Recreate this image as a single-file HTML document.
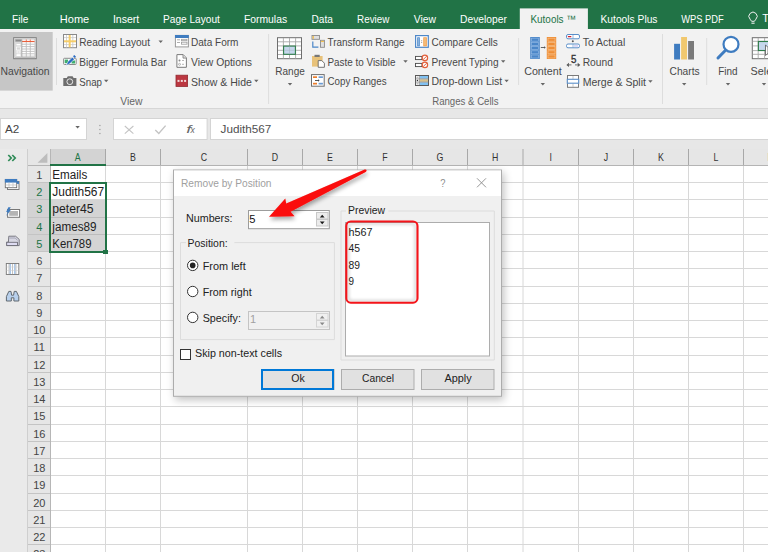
<!DOCTYPE html><html><head><meta charset="utf-8"><style>html,body{margin:0;padding:0;width:768px;height:552px;overflow:hidden;background:#fff}svg{display:block}text{font-family:"Liberation Sans",sans-serif;white-space:pre}</style></head><body>
<svg width="768" height="552" viewBox="0 0 768 552">
<rect x="0" y="0" width="768" height="29" fill="#217346" />
<text x="12.0" y="23" font-size="11" fill="#fff" textLength="16.3" lengthAdjust="spacingAndGlyphs" >File</text>
<text x="59.8" y="23" font-size="11" fill="#fff" textLength="29.4" lengthAdjust="spacingAndGlyphs" >Home</text>
<text x="112.9" y="23" font-size="11" fill="#fff" textLength="26.4" lengthAdjust="spacingAndGlyphs" >Insert</text>
<text x="163.0" y="23" font-size="11" fill="#fff" textLength="56.9" lengthAdjust="spacingAndGlyphs" >Page Layout</text>
<text x="243.9" y="23" font-size="11" fill="#fff" textLength="43.2" lengthAdjust="spacingAndGlyphs" >Formulas</text>
<text x="311.5" y="23" font-size="11" fill="#fff" textLength="21.3" lengthAdjust="spacingAndGlyphs" >Data</text>
<text x="357.1" y="23" font-size="11" fill="#fff" textLength="32.2" lengthAdjust="spacingAndGlyphs" >Review</text>
<text x="413.7" y="23" font-size="11" fill="#fff" textLength="22.3" lengthAdjust="spacingAndGlyphs" >View</text>
<text x="460.1" y="23" font-size="11" fill="#fff" textLength="46.7" lengthAdjust="spacingAndGlyphs" >Developer</text>
<text x="600.5" y="23" font-size="11" fill="#fff" textLength="57" lengthAdjust="spacingAndGlyphs" >Kutools Plus</text>
<text x="681.2" y="23" font-size="11" fill="#fff" textLength="42.6" lengthAdjust="spacingAndGlyphs" >WPS PDF</text>
<rect x="519.8" y="8.4" width="68.1" height="22" fill="#f2f2f2" />
<text x="530.5" y="23" font-size="11" fill="#217346" textLength="45.7" lengthAdjust="spacingAndGlyphs" >Kutools ™</text>
<g fill="none" stroke="#f0f0f0" stroke-width="1"><path d="M751.6 21.3 L750.1 19.2 A4.1 4.1 0 1 1 755.9 19.2 L754.4 21.3 Z"/><path d="M751.4 23.2 h3.2" stroke-width="1.1"/></g>
<text x="762.2" y="22.4" font-size="11" fill="#fff" >T</text>
<rect x="0" y="29" width="768" height="79" fill="#f2f2f2" />
<rect x="0" y="32" width="52.7" height="58.6" fill="#c6c6c6" />
<text x="0.5" y="75" font-size="11" fill="#484848" textLength="49" lengthAdjust="spacingAndGlyphs" >Navigation</text>
<line x1="56.5" y1="38" x2="56.5" y2="85" stroke="#dddddd" stroke-width="1" />
<line x1="268.6" y1="34" x2="268.6" y2="104" stroke="#dddddd" stroke-width="1" />
<line x1="518.6" y1="38" x2="518.6" y2="85" stroke="#dddddd" stroke-width="1" />
<line x1="662.5" y1="34" x2="662.5" y2="104" stroke="#dddddd" stroke-width="1" />
<line x1="706.7" y1="38" x2="706.7" y2="85" stroke="#dddddd" stroke-width="1" />
<text x="79.3" y="45.6" font-size="10.5" fill="#484848" textLength="70.7" lengthAdjust="spacingAndGlyphs" >Reading Layout</text>
<text x="79.3" y="65.69999999999999" font-size="10.5" fill="#484848" textLength="87.2" lengthAdjust="spacingAndGlyphs" >Bigger Formula Bar</text>
<text x="79.3" y="85.8" font-size="10.5" fill="#484848" textLength="22.7" lengthAdjust="spacingAndGlyphs" >Snap</text>
<text x="191.0" y="45.6" font-size="10.5" fill="#484848" textLength="47.5" lengthAdjust="spacingAndGlyphs" >Data Form</text>
<text x="191.0" y="65.69999999999999" font-size="10.5" fill="#484848" textLength="60.9" lengthAdjust="spacingAndGlyphs" >View Options</text>
<text x="191.0" y="85.8" font-size="10.5" fill="#484848" textLength="60.9" lengthAdjust="spacingAndGlyphs" >Show &amp; Hide</text>
<text x="327.5" y="46.1" font-size="10.5" fill="#484848" textLength="77" lengthAdjust="spacingAndGlyphs" >Transform Range</text>
<text x="327.5" y="65.6" font-size="10.5" fill="#484848" textLength="67.9" lengthAdjust="spacingAndGlyphs" >Paste to Visible</text>
<text x="327.5" y="85.3" font-size="10.5" fill="#484848" textLength="59.1" lengthAdjust="spacingAndGlyphs" >Copy Ranges</text>
<text x="431.4" y="45.9" font-size="10.5" fill="#484848" textLength="66.5" lengthAdjust="spacingAndGlyphs" >Compare Cells</text>
<text x="431.4" y="65.6" font-size="10.5" fill="#484848" textLength="67.2" lengthAdjust="spacingAndGlyphs" >Prevent Typing</text>
<text x="431.4" y="85.1" font-size="10.5" fill="#484848" textLength="70.9" lengthAdjust="spacingAndGlyphs" >Drop-down List</text>
<text x="582.7" y="45.6" font-size="10.5" fill="#484848" textLength="42.6" lengthAdjust="spacingAndGlyphs" >To Actual</text>
<text x="582.7" y="66.1" font-size="10.5" fill="#484848" textLength="30.3" lengthAdjust="spacingAndGlyphs" >Round</text>
<text x="582.7" y="85.69999999999999" font-size="10.5" fill="#484848" textLength="63.3" lengthAdjust="spacingAndGlyphs" >Merge &amp; Split</text>
<text x="275.3" y="75" font-size="11" fill="#484848" textLength="29.5" lengthAdjust="spacingAndGlyphs" >Range</text>
<text x="524.2" y="75" font-size="11" fill="#484848" textLength="37.5" lengthAdjust="spacingAndGlyphs" >Content</text>
<text x="669.6" y="75" font-size="11" fill="#484848" textLength="30" lengthAdjust="spacingAndGlyphs" >Charts</text>
<text x="718.3" y="75" font-size="11" fill="#484848" textLength="19.3" lengthAdjust="spacingAndGlyphs" >Find</text>
<text x="750.6" y="75" font-size="11" fill="#484848" textLength="30" lengthAdjust="spacingAndGlyphs" >Select</text>
<text x="120.25" y="105.2" font-size="11" fill="#666" textLength="22.25" lengthAdjust="spacingAndGlyphs" >View</text>
<text x="432.2" y="105.2" font-size="11" fill="#666" textLength="66.4" lengthAdjust="spacingAndGlyphs" >Ranges &amp; Cells</text>
<path d="M158.5 40.599999999999994 h4.4 l-2.2 2.4 z" fill="#666"/>
<path d="M104.0 79.8 h4.4 l-2.2 2.4 z" fill="#666"/>
<path d="M254.10000000000002 79.8 h4.4 l-2.2 2.4 z" fill="#666"/>
<path d="M403.3 60.3 h4.4 l-2.2 2.4 z" fill="#666"/>
<path d="M501.0 60.3 h4.4 l-2.2 2.4 z" fill="#666"/>
<path d="M504.40000000000003 79.8 h4.4 l-2.2 2.4 z" fill="#666"/>
<path d="M648.1999999999999 80.3 h4.4 l-2.2 2.4 z" fill="#666"/>
<path d="M287.8 83.1 h4.4 l-2.2 2.4 z" fill="#666"/>
<path d="M540.5999999999999 83.1 h4.4 l-2.2 2.4 z" fill="#666"/>
<path d="M682.0 83.1 h4.4 l-2.2 2.4 z" fill="#666"/>
<path d="M725.8 83.1 h4.4 l-2.2 2.4 z" fill="#666"/>
<path d="M761.8 83.1 h4.4 l-2.2 2.4 z" fill="#666"/>
<rect x="0" y="108" width="768" height="41.5" fill="#e7e7e7" />
<line x1="0" y1="108.5" x2="768" y2="108.5" stroke="#d6d6d6" stroke-width="1" />
<rect x="0.5" y="118.5" width="86" height="21" fill="#fff" stroke="#d4d4d4" stroke-width="1" />
<text x="5" y="133.3" font-size="11" fill="#444" textLength="14.3" lengthAdjust="spacingAndGlyphs" >A2</text>
<path d="M75.39999999999999 126.1 h4.4 l-2.2 2.4 z" fill="#666"/>
<rect x="99.3" y="124.9" width="1.2" height="1.2" fill="#9a9a9a" />
<rect x="99.3" y="128.9" width="1.2" height="1.2" fill="#9a9a9a" />
<rect x="99.3" y="132.9" width="1.2" height="1.2" fill="#9a9a9a" />
<rect x="113.5" y="118.5" width="93.6" height="21" fill="#fff" stroke="#d4d4d4" stroke-width="1" />
<rect x="210.5" y="118.5" width="560" height="21" fill="#fff" stroke="#d4d4d4" stroke-width="1" />
<text x="220.6" y="133.3" font-size="11.2" fill="#505050" textLength="50.8" lengthAdjust="spacingAndGlyphs" >Judith567</text>
<rect x="0" y="149" width="28" height="403" fill="#eaeaea" />
<line x1="27.5" y1="149" x2="27.5" y2="552" stroke="#cfcfcf" stroke-width="1" />
<rect x="28" y="149" width="740" height="16" fill="#e6e6e6" />
<rect x="28" y="165" width="22" height="390" fill="#e6e6e6" />
<rect x="50" y="149" width="55.5" height="16" fill="#d3d3d3" />
<rect x="28" y="182.5" width="22" height="69.0" fill="#d3d3d3" />
<line x1="50.5" y1="182.5" x2="768" y2="182.5" stroke="#d8d8d8" stroke-width="1" />
<line x1="28" y1="182.5" x2="50" y2="182.5" stroke="#c4c4c4" stroke-width="1" />
<line x1="50.5" y1="199.5" x2="768" y2="199.5" stroke="#d8d8d8" stroke-width="1" />
<line x1="28" y1="199.5" x2="50" y2="199.5" stroke="#c4c4c4" stroke-width="1" />
<line x1="50.5" y1="217.5" x2="768" y2="217.5" stroke="#d8d8d8" stroke-width="1" />
<line x1="28" y1="217.5" x2="50" y2="217.5" stroke="#c4c4c4" stroke-width="1" />
<line x1="50.5" y1="234.5" x2="768" y2="234.5" stroke="#d8d8d8" stroke-width="1" />
<line x1="28" y1="234.5" x2="50" y2="234.5" stroke="#c4c4c4" stroke-width="1" />
<line x1="50.5" y1="251.5" x2="768" y2="251.5" stroke="#d8d8d8" stroke-width="1" />
<line x1="28" y1="251.5" x2="50" y2="251.5" stroke="#c4c4c4" stroke-width="1" />
<line x1="50.5" y1="268.5" x2="768" y2="268.5" stroke="#d8d8d8" stroke-width="1" />
<line x1="28" y1="268.5" x2="50" y2="268.5" stroke="#c4c4c4" stroke-width="1" />
<line x1="50.5" y1="286.5" x2="768" y2="286.5" stroke="#d8d8d8" stroke-width="1" />
<line x1="28" y1="286.5" x2="50" y2="286.5" stroke="#c4c4c4" stroke-width="1" />
<line x1="50.5" y1="303.5" x2="768" y2="303.5" stroke="#d8d8d8" stroke-width="1" />
<line x1="28" y1="303.5" x2="50" y2="303.5" stroke="#c4c4c4" stroke-width="1" />
<line x1="50.5" y1="320.5" x2="768" y2="320.5" stroke="#d8d8d8" stroke-width="1" />
<line x1="28" y1="320.5" x2="50" y2="320.5" stroke="#c4c4c4" stroke-width="1" />
<line x1="50.5" y1="337.5" x2="768" y2="337.5" stroke="#d8d8d8" stroke-width="1" />
<line x1="28" y1="337.5" x2="50" y2="337.5" stroke="#c4c4c4" stroke-width="1" />
<line x1="50.5" y1="355.5" x2="768" y2="355.5" stroke="#d8d8d8" stroke-width="1" />
<line x1="28" y1="355.5" x2="50" y2="355.5" stroke="#c4c4c4" stroke-width="1" />
<line x1="50.5" y1="372.5" x2="768" y2="372.5" stroke="#d8d8d8" stroke-width="1" />
<line x1="28" y1="372.5" x2="50" y2="372.5" stroke="#c4c4c4" stroke-width="1" />
<line x1="50.5" y1="389.5" x2="768" y2="389.5" stroke="#d8d8d8" stroke-width="1" />
<line x1="28" y1="389.5" x2="50" y2="389.5" stroke="#c4c4c4" stroke-width="1" />
<line x1="50.5" y1="406.5" x2="768" y2="406.5" stroke="#d8d8d8" stroke-width="1" />
<line x1="28" y1="406.5" x2="50" y2="406.5" stroke="#c4c4c4" stroke-width="1" />
<line x1="50.5" y1="424.5" x2="768" y2="424.5" stroke="#d8d8d8" stroke-width="1" />
<line x1="28" y1="424.5" x2="50" y2="424.5" stroke="#c4c4c4" stroke-width="1" />
<line x1="50.5" y1="441.5" x2="768" y2="441.5" stroke="#d8d8d8" stroke-width="1" />
<line x1="28" y1="441.5" x2="50" y2="441.5" stroke="#c4c4c4" stroke-width="1" />
<line x1="50.5" y1="458.5" x2="768" y2="458.5" stroke="#d8d8d8" stroke-width="1" />
<line x1="28" y1="458.5" x2="50" y2="458.5" stroke="#c4c4c4" stroke-width="1" />
<line x1="50.5" y1="475.5" x2="768" y2="475.5" stroke="#d8d8d8" stroke-width="1" />
<line x1="28" y1="475.5" x2="50" y2="475.5" stroke="#c4c4c4" stroke-width="1" />
<line x1="50.5" y1="493.5" x2="768" y2="493.5" stroke="#d8d8d8" stroke-width="1" />
<line x1="28" y1="493.5" x2="50" y2="493.5" stroke="#c4c4c4" stroke-width="1" />
<line x1="50.5" y1="510.5" x2="768" y2="510.5" stroke="#d8d8d8" stroke-width="1" />
<line x1="28" y1="510.5" x2="50" y2="510.5" stroke="#c4c4c4" stroke-width="1" />
<line x1="50.5" y1="527.5" x2="768" y2="527.5" stroke="#d8d8d8" stroke-width="1" />
<line x1="28" y1="527.5" x2="50" y2="527.5" stroke="#c4c4c4" stroke-width="1" />
<line x1="50.5" y1="544.5" x2="768" y2="544.5" stroke="#d8d8d8" stroke-width="1" />
<line x1="28" y1="544.5" x2="50" y2="544.5" stroke="#c4c4c4" stroke-width="1" />
<line x1="50.5" y1="562.5" x2="768" y2="562.5" stroke="#d8d8d8" stroke-width="1" />
<line x1="28" y1="562.5" x2="50" y2="562.5" stroke="#c4c4c4" stroke-width="1" />
<line x1="105.5" y1="166" x2="105.5" y2="552" stroke="#d8d8d8" stroke-width="1" />
<line x1="105.5" y1="149" x2="105.5" y2="165" stroke="#a8a8a8" stroke-width="1" />
<line x1="160.5" y1="166" x2="160.5" y2="552" stroke="#d8d8d8" stroke-width="1" />
<line x1="160.5" y1="149" x2="160.5" y2="165" stroke="#a8a8a8" stroke-width="1" />
<line x1="247.5" y1="166" x2="247.5" y2="552" stroke="#d8d8d8" stroke-width="1" />
<line x1="247.5" y1="149" x2="247.5" y2="165" stroke="#a8a8a8" stroke-width="1" />
<line x1="302.5" y1="166" x2="302.5" y2="552" stroke="#d8d8d8" stroke-width="1" />
<line x1="302.5" y1="149" x2="302.5" y2="165" stroke="#a8a8a8" stroke-width="1" />
<line x1="357.5" y1="166" x2="357.5" y2="552" stroke="#d8d8d8" stroke-width="1" />
<line x1="357.5" y1="149" x2="357.5" y2="165" stroke="#a8a8a8" stroke-width="1" />
<line x1="412.5" y1="166" x2="412.5" y2="552" stroke="#d8d8d8" stroke-width="1" />
<line x1="412.5" y1="149" x2="412.5" y2="165" stroke="#a8a8a8" stroke-width="1" />
<line x1="467.5" y1="166" x2="467.5" y2="552" stroke="#d8d8d8" stroke-width="1" />
<line x1="467.5" y1="149" x2="467.5" y2="165" stroke="#a8a8a8" stroke-width="1" />
<line x1="523.0" y1="166" x2="523.0" y2="552" stroke="#d8d8d8" stroke-width="1" />
<line x1="523.0" y1="149" x2="523.0" y2="165" stroke="#a8a8a8" stroke-width="1" />
<line x1="578.5" y1="166" x2="578.5" y2="552" stroke="#d8d8d8" stroke-width="1" />
<line x1="578.5" y1="149" x2="578.5" y2="165" stroke="#a8a8a8" stroke-width="1" />
<line x1="633.5" y1="166" x2="633.5" y2="552" stroke="#d8d8d8" stroke-width="1" />
<line x1="633.5" y1="149" x2="633.5" y2="165" stroke="#a8a8a8" stroke-width="1" />
<line x1="688.5" y1="166" x2="688.5" y2="552" stroke="#d8d8d8" stroke-width="1" />
<line x1="688.5" y1="149" x2="688.5" y2="165" stroke="#a8a8a8" stroke-width="1" />
<line x1="743.5" y1="166" x2="743.5" y2="552" stroke="#d8d8d8" stroke-width="1" />
<line x1="743.5" y1="149" x2="743.5" y2="165" stroke="#a8a8a8" stroke-width="1" />
<line x1="28" y1="165.5" x2="768" y2="165.5" stroke="#b4b4b4" stroke-width="1" />
<line x1="50.5" y1="149" x2="50.5" y2="552" stroke="#b6b6b6" stroke-width="1" />
<line x1="50" y1="165" x2="106" y2="165" stroke="#217346" stroke-width="2" />
<path d="M47.4 153 L47.4 162.8 L37.6 162.8 Z" fill="#bdbdbd"/>
<text x="74.81" y="161" font-size="11" fill="#217346" textLength="5.87" lengthAdjust="spacingAndGlyphs" >A</text>
<text x="130.06" y="161" font-size="11" fill="#333" textLength="5.87" lengthAdjust="spacingAndGlyphs" >B</text>
<text x="200.82" y="161" font-size="11" fill="#333" textLength="6.35" lengthAdjust="spacingAndGlyphs" >C</text>
<text x="271.82" y="161" font-size="11" fill="#333" textLength="6.35" lengthAdjust="spacingAndGlyphs" >D</text>
<text x="327.06" y="161" font-size="11" fill="#333" textLength="5.87" lengthAdjust="spacingAndGlyphs" >E</text>
<text x="382.31" y="161" font-size="11" fill="#333" textLength="5.38" lengthAdjust="spacingAndGlyphs" >F</text>
<text x="436.58" y="161" font-size="11" fill="#333" textLength="6.85" lengthAdjust="spacingAndGlyphs" >G</text>
<text x="492.07" y="161" font-size="11" fill="#333" textLength="6.35" lengthAdjust="spacingAndGlyphs" >H</text>
<text x="549.53" y="161" font-size="11" fill="#333" textLength="2.45" lengthAdjust="spacingAndGlyphs" >I</text>
<text x="603.8" y="161" font-size="11" fill="#333" textLength="4.4" lengthAdjust="spacingAndGlyphs" >J</text>
<text x="658.06" y="161" font-size="11" fill="#333" textLength="5.87" lengthAdjust="spacingAndGlyphs" >K</text>
<text x="713.55" y="161" font-size="11" fill="#333" textLength="4.9" lengthAdjust="spacingAndGlyphs" >L</text>
<text x="767.59" y="161" font-size="11" fill="#333" textLength="7.33" lengthAdjust="spacingAndGlyphs" >M</text>
<text x="39.25" y="178.95000000000002" font-size="11" fill="#444" text-anchor="middle" >1</text>
<text x="39.25" y="196.20000000000002" font-size="11" fill="#217346" text-anchor="middle" >2</text>
<text x="39.25" y="213.45000000000002" font-size="11" fill="#217346" text-anchor="middle" >3</text>
<text x="39.25" y="230.70000000000002" font-size="11" fill="#217346" text-anchor="middle" >4</text>
<text x="39.25" y="247.95000000000002" font-size="11" fill="#217346" text-anchor="middle" >5</text>
<text x="39.25" y="265.2" font-size="11" fill="#444" text-anchor="middle" >6</text>
<text x="39.25" y="282.45" font-size="11" fill="#444" text-anchor="middle" >7</text>
<text x="39.25" y="299.7" font-size="11" fill="#444" text-anchor="middle" >8</text>
<text x="39.25" y="316.95" font-size="11" fill="#444" text-anchor="middle" >9</text>
<text x="39.25" y="334.2" font-size="11" fill="#444" text-anchor="middle" >10</text>
<text x="39.25" y="351.45" font-size="11" fill="#444" text-anchor="middle" >11</text>
<text x="39.25" y="368.7" font-size="11" fill="#444" text-anchor="middle" >12</text>
<text x="39.25" y="385.95" font-size="11" fill="#444" text-anchor="middle" >13</text>
<text x="39.25" y="403.2" font-size="11" fill="#444" text-anchor="middle" >14</text>
<text x="39.25" y="420.45" font-size="11" fill="#444" text-anchor="middle" >15</text>
<text x="39.25" y="437.7" font-size="11" fill="#444" text-anchor="middle" >16</text>
<text x="39.25" y="454.95" font-size="11" fill="#444" text-anchor="middle" >17</text>
<text x="39.25" y="472.2" font-size="11" fill="#444" text-anchor="middle" >18</text>
<text x="39.25" y="489.45" font-size="11" fill="#444" text-anchor="middle" >19</text>
<text x="39.25" y="506.7" font-size="11" fill="#444" text-anchor="middle" >20</text>
<text x="39.25" y="523.9499999999999" font-size="11" fill="#444" text-anchor="middle" >21</text>
<text x="39.25" y="541.1999999999999" font-size="11" fill="#444" text-anchor="middle" >22</text>
<text x="39.25" y="558.4499999999999" font-size="11" fill="#444" text-anchor="middle" >23</text>
<rect x="51" y="200.0" width="54" height="51.5" fill="#d4d4d4" />
<line x1="51" y1="217.5" x2="105" y2="217.5" stroke="#bcbcbc" stroke-width="1" />
<line x1="51" y1="234.5" x2="105" y2="234.5" stroke="#bcbcbc" stroke-width="1" />
<rect x="50" y="183" width="56" height="69" fill="none" stroke="#217346" stroke-width="2" />
<rect x="103" y="250" width="5" height="4" fill="#217346" />
<text x="52.3" y="178.75" font-size="12" fill="#222" textLength="35" lengthAdjust="spacingAndGlyphs" >Emails</text>
<text x="52.3" y="196.0" font-size="12" fill="#222" textLength="51.8" lengthAdjust="spacingAndGlyphs" >Judith567</text>
<text x="52.3" y="213.25" font-size="12" fill="#222" textLength="41.3" lengthAdjust="spacingAndGlyphs" >peter45</text>
<text x="52.3" y="230.5" font-size="12" fill="#222" textLength="44.2" lengthAdjust="spacingAndGlyphs" >james89</text>
<text x="52.3" y="247.75" font-size="12" fill="#222" textLength="39.2" lengthAdjust="spacingAndGlyphs" >Ken789</text>
<defs><filter id="sh" x="-10%" y="-10%" width="130%" height="130%"><feGaussianBlur in="SourceAlpha" stdDeviation="4"/><feOffset dx="2" dy="3"/><feComponentTransfer><feFuncA type="linear" slope="0.25"/></feComponentTransfer><feMerge><feMergeNode/><feMergeNode in="SourceGraphic"/></feMerge></filter><filter id="ash" x="-20%" y="-40%" width="150%" height="200%"><feGaussianBlur in="SourceAlpha" stdDeviation="2"/><feOffset dx="1" dy="3"/><feComponentTransfer><feFuncA type="linear" slope="0.35"/></feComponentTransfer><feMerge><feMergeNode/><feMergeNode in="SourceGraphic"/></feMerge></filter></defs>
<rect x="173.5" y="170" width="328" height="226.3" fill="#f0f0f0" stroke="#acacac" stroke-width="1" filter="url(#sh)"/>
<rect x="174" y="170.5" width="327" height="25.5" fill="#fff" />
<text x="181" y="187.3" font-size="10.5" fill="#a0a0a0" textLength="90.5" lengthAdjust="spacingAndGlyphs" >Remove by Position</text>
<text x="440.2" y="186.7" font-size="11.5" fill="#8c8c8c" textLength="5.2" lengthAdjust="spacingAndGlyphs" >?</text>
<path d="M477 178.3 L486 187.3 M486 178.3 L477 187.3" stroke="#8a8a8a" stroke-width="0.9"/>
<text x="186" y="222.1" font-size="11.5" fill="#222" textLength="46.5" lengthAdjust="spacingAndGlyphs" >Numbers:</text>
<rect x="248.5" y="210.5" width="80.8" height="18.2" fill="#fff" stroke="#9c9c9c" stroke-width="1" />
<text x="249.2" y="222.6" font-size="11" fill="#111" textLength="6.2" lengthAdjust="spacingAndGlyphs" >5</text>
<rect x="316.5" y="212.5" width="11.5" height="6.5" fill="#ececec" stroke="#c8c8c8" stroke-width="1" />
<rect x="316.5" y="219.5" width="11.5" height="6.5" fill="#ececec" stroke="#c8c8c8" stroke-width="1" />
<path d="M319.8 217.6 h4.8 l-2.4 -2.8 z M319.8 221.4 h4.8 l-2.4 2.8 z" fill="#1a1a1a"/>
<path d="M186 242.6 h-5.5 v97 h153.9 v-97 h-100" fill="none" stroke="#dcdcdc"/>
<text x="187.6" y="246.6" font-size="11.5" fill="#222" textLength="40" lengthAdjust="spacingAndGlyphs" >Position:</text>
<circle cx="192.7" cy="265.4" r="5.2" fill="#fff" stroke="#333" stroke-width="1"/>
<text x="202.7" y="269.79999999999995" font-size="11.5" fill="#222" textLength="43" lengthAdjust="spacingAndGlyphs" >From left</text>
<circle cx="192.7" cy="291.5" r="5.2" fill="#fff" stroke="#333" stroke-width="1"/>
<text x="202.7" y="295.9" font-size="11.5" fill="#222" textLength="49" lengthAdjust="spacingAndGlyphs" >From right</text>
<circle cx="192.7" cy="317.4" r="5.2" fill="#fff" stroke="#333" stroke-width="1"/>
<text x="202.7" y="321.79999999999995" font-size="11.5" fill="#222" textLength="38.2" lengthAdjust="spacingAndGlyphs" >Specify:</text>
<circle cx="192.7" cy="265.4" r="2.8" fill="#222"/>
<rect x="248.5" y="311.5" width="81" height="18" fill="#f0f0f0" stroke="#c4c4c4" stroke-width="1" />
<text x="250" y="322.8" font-size="11" fill="#a0a0a0" >1</text>
<rect x="316.5" y="313.5" width="11.5" height="6.5" fill="#f0f0f0" stroke="#d4d4d4" stroke-width="1" />
<rect x="316.5" y="320.5" width="11.5" height="6.5" fill="#f0f0f0" stroke="#d4d4d4" stroke-width="1" />
<path d="M319.8 318.6 h4.8 l-2.4 -2.8 z M319.8 322.4 h4.8 l-2.4 2.8 z" fill="#8a8a8a"/>
<rect x="180.5" y="349.5" width="10" height="10" fill="#fff" stroke="#333" stroke-width="1" />
<text x="195" y="357.4" font-size="11" fill="#222" textLength="87" lengthAdjust="spacingAndGlyphs" >Skip non-text cells</text>
<path d="M346 211 h-5 v149 h153.3 v-149 h-106" fill="none" stroke="#dcdcdc"/>
<text x="348" y="214.3" font-size="10.2" fill="#222" textLength="37" lengthAdjust="spacingAndGlyphs" >Preview</text>
<rect x="345.5" y="222.5" width="144" height="133.5" fill="#fff" stroke="#adadad" stroke-width="1" />
<text x="348.5" y="236.0" font-size="11" fill="#222" textLength="24" lengthAdjust="spacingAndGlyphs" >h567</text>
<text x="348.5" y="252.29999999999998" font-size="11" fill="#222" textLength="11.5" lengthAdjust="spacingAndGlyphs" >45</text>
<text x="348.5" y="268.8" font-size="11" fill="#222" textLength="11.5" lengthAdjust="spacingAndGlyphs" >89</text>
<text x="348.5" y="284.8" font-size="11" fill="#222" textLength="5.5" lengthAdjust="spacingAndGlyphs" >9</text>
<defs><filter id="ish" x="-20%" y="-20%" width="140%" height="140%"><feGaussianBlur stdDeviation="1.6"/></filter></defs>
<rect x="348.2" y="223.5" width="67.3" height="77.5" fill="none" stroke="#000" stroke-width="2.5" rx="4" opacity="0.16" filter="url(#ish)"/>
<rect x="346.3" y="221.5" width="71.2" height="81.2" fill="none" stroke="#f5141a" stroke-width="2.1" rx="4.5"/>
<rect x="261.5" y="369.5" width="72.5" height="20" fill="#e1e1e1" stroke="#adadad" stroke-width="1" />
<text x="291.25" y="382.3" font-size="11" fill="#222" textLength="13.5" lengthAdjust="spacingAndGlyphs" >Ok</text>
<rect x="341.5" y="369.5" width="72.5" height="20" fill="#e1e1e1" stroke="#adadad" stroke-width="1" />
<text x="362.0" y="382.3" font-size="11" fill="#222" textLength="32" lengthAdjust="spacingAndGlyphs" >Cancel</text>
<rect x="421.5" y="369.5" width="72.5" height="20" fill="#e1e1e1" stroke="#adadad" stroke-width="1" />
<text x="444.4" y="382.3" font-size="11" fill="#222" textLength="27.2" lengthAdjust="spacingAndGlyphs" >Apply</text>
<rect x="262" y="370" width="71" height="19" fill="none" stroke="#0078d7" stroke-width="2" />
<path d="M269 216.8 L285.3 198.4 L286.2 203.6 L364.6 169.5 Q366.5 169 366.6 170.6 Q366.6 171.6 365.7 172 L290.6 211.8 L294.6 216.2 Z" fill="#fa0a0a" filter="url(#ash)"/>
<rect x="13.7" y="37.7" width="22.5" height="21" fill="#fff" stroke="#7a7a7a" stroke-width="1"/>
<rect x="15" y="39" width="20" height="18.5" fill="#fff" stroke="#b0b0b0" stroke-width="0.8"/>
<rect x="15.4" y="39.4" width="6.2" height="2.4" fill="#8a8a8a"/>
<rect x="15.4" y="41.8" width="6.2" height="15.4" fill="#d8d8d8"/>
<line x1="22" y1="41.5" x2="34.6" y2="41.5" stroke="#e8603c" stroke-width="1.2"/>
<line x1="26.3" y1="39.5" x2="26.3" y2="42" stroke="#e8603c" stroke-width="0.8"/><line x1="30.3" y1="39.5" x2="30.3" y2="42" stroke="#e8603c" stroke-width="0.8"/>
<line x1="22" y1="44.2" x2="34.6" y2="44.2" stroke="#bdbdbd" stroke-width="0.9"/>
<line x1="22" y1="46.6" x2="34.6" y2="46.6" stroke="#bdbdbd" stroke-width="0.9"/>
<line x1="22" y1="49" x2="34.6" y2="49" stroke="#bdbdbd" stroke-width="0.9"/>
<line x1="22" y1="51.4" x2="34.6" y2="51.4" stroke="#bdbdbd" stroke-width="0.9"/>
<line x1="22" y1="53.8" x2="34.6" y2="53.8" stroke="#bdbdbd" stroke-width="0.9"/>
<line x1="22" y1="56.2" x2="34.6" y2="56.2" stroke="#bdbdbd" stroke-width="0.9"/>
<line x1="26.3" y1="42" x2="26.3" y2="57" stroke="#bdbdbd" stroke-width="0.9"/>
<line x1="30.3" y1="42" x2="30.3" y2="57" stroke="#bdbdbd" stroke-width="0.9"/>
<line x1="21.8" y1="39.5" x2="21.8" y2="57" stroke="#9a9a9a" stroke-width="0.8"/>
<rect x="16.5" y="44" width="4" height="1.3" fill="#fff"/><rect x="16.5" y="47" width="4" height="3" fill="none" stroke="#fff" stroke-width="0.7"/><rect x="17" y="51" width="3" height="2" fill="none" stroke="#fff" stroke-width="0.7"/><rect x="16.5" y="54.2" width="4" height="1.8" fill="#fff"/>
<rect x="63.5" y="34.5" width="13" height="13.2" fill="#fff" stroke="#8a8a8a" stroke-width="1"/>
<line x1="66.5" y1="35" x2="66.5" y2="47.5" stroke="#c8c8c8" stroke-width="0.8"/>
<line x1="72.8" y1="35" x2="72.8" y2="47.5" stroke="#c8c8c8" stroke-width="0.8"/>
<line x1="64" y1="37.6" x2="76" y2="37.6" stroke="#c8c8c8" stroke-width="0.8"/>
<line x1="64" y1="44.6" x2="76" y2="44.6" stroke="#c8c8c8" stroke-width="0.8"/>
<line x1="69.7" y1="35" x2="69.7" y2="47.3" stroke="#f5cd6a" stroke-width="2"/><line x1="64" y1="41.3" x2="76" y2="41.3" stroke="#f5cd6a" stroke-width="2"/>
<rect x="63.6" y="58.3" width="12.6" height="6.2" rx="0.8" fill="#fff" stroke="#8a8a8a" stroke-width="1"/>
<rect x="64.7" y="59.6" width="3.3" height="3.6" fill="#3eae6e"/><rect x="71.5" y="60.5" width="3.6" height="3" fill="#3eae6e"/>
<path d="M66 65.5 L68 61.6 L72.3 57.3 L74.3 59.3 L70 63.6 Z" fill="#2b6cc4" stroke="#fff" stroke-width="0.5"/><path d="M73 56.2 L74.3 55 L76 56.8 L74.8 58 Z" fill="#2b6cc4"/>
<path d="M63.3 78 h3.5 l1 -1.8 h4.8 l1 1.8 h2.8 v8 h-13.1 z" fill="#6e6e6e"/>
<circle cx="69.8" cy="81.7" r="2.9" fill="#6e6e6e" stroke="#e8e8e8" stroke-width="1"/>
<rect x="175.4" y="35.4" width="13" height="11.5" fill="#fff" stroke="#9a9a9a" stroke-width="1"/>
<rect x="175" y="35" width="13.8" height="3" fill="#3f7cc0"/>
<line x1="177" y1="39.8" x2="180" y2="39.8" stroke="#9a9a9a" stroke-width="0.8"/><line x1="177" y1="42.5" x2="180" y2="42.5" stroke="#9a9a9a" stroke-width="0.8"/>
<rect x="181.5" y="39.2" width="5.5" height="1.6" fill="#ccc" stroke="#999" stroke-width="0.6"/><rect x="181.5" y="42.2" width="5.5" height="2" fill="#fff" stroke="#999" stroke-width="0.8"/>
<path d="M176.9 54.6 h6.3 l3.2 3.3 v9.4 h-9.5 z" fill="#fff" stroke="#7a7a7a" stroke-width="1"/><path d="M183 54.8 v3.3 h3.3" fill="#ddd" stroke="#7a7a7a" stroke-width="0.8"/>
<circle cx="179.5" cy="60.5" r="1" fill="#8a8a8a"/><circle cx="179.5" cy="64.3" r="1" fill="none" stroke="#8a8a8a" stroke-width="0.6"/><line x1="182" y1="60.5" x2="184" y2="60.5" stroke="#999" stroke-width="0.7"/><line x1="182" y1="64.3" x2="184" y2="64.3" stroke="#999" stroke-width="0.7"/>
<rect x="176" y="75.2" width="11.6" height="11.2" fill="#bc3741" stroke="#922830" stroke-width="0.8"/>
<rect x="177.5" y="79.9" width="2" height="2" fill="#f2dcdc"/>
<rect x="180.8" y="79.9" width="2" height="2" fill="#f2dcdc"/>
<rect x="184.1" y="79.9" width="2" height="2" fill="#f2dcdc"/>
<rect x="277.5" y="37.7" width="24" height="21" fill="#fff" stroke="#6e6e6e" stroke-width="1"/>
<line x1="283.4" y1="38" x2="283.4" y2="58.5" stroke="#a8a8a8" stroke-width="0.9"/>
<line x1="289.5" y1="38" x2="289.5" y2="58.5" stroke="#a8a8a8" stroke-width="0.9"/>
<line x1="295.6" y1="38" x2="295.6" y2="58.5" stroke="#a8a8a8" stroke-width="0.9"/>
<line x1="278" y1="41.8" x2="301" y2="41.8" stroke="#a8a8a8" stroke-width="0.9"/>
<line x1="278" y1="45.9" x2="301" y2="45.9" stroke="#a8a8a8" stroke-width="0.9"/>
<line x1="278" y1="50.3" x2="301" y2="50.3" stroke="#a8a8a8" stroke-width="0.9"/>
<line x1="278" y1="54.5" x2="301" y2="54.5" stroke="#a8a8a8" stroke-width="0.9"/>
<rect x="283.6" y="46.1" width="11.8" height="8.2" fill="#c6d7ec" stroke="#2f7d4a" stroke-width="1.1"/><line x1="289.5" y1="46.5" x2="289.5" y2="54" stroke="#a8b8c8" stroke-width="0.6"/><line x1="284" y1="50.3" x2="295" y2="50.3" stroke="#a8b8c8" stroke-width="0.6"/>
<rect x="312" y="35.5" width="7.5" height="3.8" fill="#e0e0e0" stroke="#8a8a8a" stroke-width="0.9"/><rect x="312.6" y="36" width="1.3" height="2.8" fill="#f3c04f"/>
<rect x="320.5" y="40.3" width="3.9" height="7" fill="#e0e0e0" stroke="#8a8a8a" stroke-width="0.9"/><rect x="321" y="40.8" width="2.9" height="1.2" fill="#f3c04f"/>
<path d="M312.8 41.5 v5.6 h5.6" fill="none" stroke="#4a86c8" stroke-width="1.2"/>
<rect x="312" y="56" width="10.6" height="10.6" fill="#e8c27a"/><rect x="314.5" y="54.8" width="5.2" height="2.2" fill="#777"/>
<path d="M318.2 60.6 h3.6 l2.6 2.6 v4.1 h-6.2 z" fill="#fff" stroke="#666" stroke-width="0.9"/>
<rect x="311.5" y="74.6" width="12.7" height="11.6" fill="#fff" stroke="#6e6e6e" stroke-width="1"/>
<rect x="313" y="76.3" width="4" height="1.7" fill="#ec7e2c"/><rect x="313" y="82.8" width="4" height="1.7" fill="#ec7e2c"/><rect x="318.6" y="76.3" width="4.3" height="1.7" fill="#6a9bd4"/><rect x="318.6" y="82.8" width="4.3" height="1.7" fill="#6a9bd4"/>
<path d="M315 80.5 h3.5" stroke="#444" stroke-width="0.9"/><path d="M318 79.3 l1.6 1.2 l-1.6 1.2 z" fill="#444"/>
<rect x="415.6" y="35.6" width="12.7" height="11.7" fill="#fff" stroke="#4f88c8" stroke-width="1.2"/>
<rect x="417.2" y="37.3" width="2.6" height="9" fill="#4a86c8"/><rect x="417.9" y="38" width="1.2" height="7.6" fill="#8ab4e0"/>
<rect x="423.3" y="37.3" width="3.5" height="9" fill="#ef9a45"/><rect x="424.3" y="38" width="1.4" height="7.6" fill="#f5c88e"/>
<rect x="421" y="40.5" width="1.2" height="0.7" fill="#888"/><rect x="421" y="42.3" width="1.2" height="0.7" fill="#888"/>
<rect x="415.5" y="56.4" width="6.5" height="3.2" fill="#fff" stroke="#4a4a4a" stroke-width="0.9"/>
<circle cx="424.9" cy="57.9" r="2.7" fill="#fff" stroke="#e2603c" stroke-width="1.2"/><line x1="423.2" y1="59.6" x2="426.6" y2="56.199999999999996" stroke="#e2603c" stroke-width="1"/>
<rect x="415.5" y="63.400000000000006" width="6.5" height="3.2" fill="#fff" stroke="#4a4a4a" stroke-width="0.9"/>
<circle cx="424.9" cy="64.9" r="2.7" fill="#fff" stroke="#e2603c" stroke-width="1.2"/><line x1="423.2" y1="66.60000000000001" x2="426.6" y2="63.2" stroke="#e2603c" stroke-width="1"/>
<rect x="415.5" y="75.5" width="13" height="10" fill="#fff" stroke="#5a5a5a" stroke-width="1"/>
<rect x="419.7" y="76" width="8.3" height="2.6" fill="#80c1f2"/><rect x="419.7" y="79.3" width="8.3" height="2.5" fill="#d8c08a"/><rect x="419.7" y="82.4" width="8.3" height="2.6" fill="#80c1f2"/>
<line x1="415.5" y1="78.9" x2="428.5" y2="78.9" stroke="#777" stroke-width="0.7"/><line x1="415.5" y1="82.1" x2="428.5" y2="82.1" stroke="#777" stroke-width="0.7"/><line x1="419.4" y1="76" x2="419.4" y2="85" stroke="#888" stroke-width="0.7"/><circle cx="417.4" cy="80.5" r="0.8" fill="#333"/><rect x="416.5" y="76.6" width="2" height="1.5" fill="#bbb"/><rect x="416.5" y="83" width="2" height="1.5" fill="#bbb"/>
<rect x="530.2" y="37" width="9.6" height="22" fill="#4a86c8"/>
<rect x="531.4" y="38.2" width="7.2" height="3" fill="none" stroke="#8fb7e3" stroke-width="0.7"/>
<rect x="531.4" y="42.400000000000006" width="7.2" height="3" fill="none" stroke="#8fb7e3" stroke-width="0.7"/>
<rect x="531.4" y="46.6" width="7.2" height="3" fill="none" stroke="#8fb7e3" stroke-width="0.7"/>
<rect x="531.4" y="50.800000000000004" width="7.2" height="3" fill="none" stroke="#8fb7e3" stroke-width="0.7"/>
<rect x="531.4" y="55.0" width="7.2" height="3" fill="none" stroke="#8fb7e3" stroke-width="0.7"/>
<rect x="546.8" y="37" width="9.4" height="22" fill="#ef8e36"/>
<rect x="548" y="38.2" width="7" height="3" fill="none" stroke="#f6c08a" stroke-width="0.7"/>
<rect x="548" y="42.400000000000006" width="7" height="3" fill="none" stroke="#f6c08a" stroke-width="0.7"/>
<rect x="548" y="46.6" width="7" height="3" fill="none" stroke="#f6c08a" stroke-width="0.7"/>
<rect x="548" y="50.800000000000004" width="7" height="3" fill="none" stroke="#f6c08a" stroke-width="0.7"/>
<rect x="548" y="55.0" width="7" height="3" fill="none" stroke="#f6c08a" stroke-width="0.7"/>
<path d="M540.8 47.5 h3.5" stroke="#555" stroke-width="0.9"/><path d="M544 46.3 l1.8 1.2 l-1.8 1.2 z" fill="#555"/>
<rect x="566.5" y="34.5" width="13" height="4.3" rx="1.5" fill="#fff" stroke="#5b8fc9" stroke-width="1"/><line x1="573" y1="34.8" x2="573" y2="38.5" stroke="#5b8fc9" stroke-width="0.6"/><rect x="567.8" y="36" width="3.6" height="1.3" rx="0.6" fill="#d2202c"/>
<circle cx="572.8" cy="41.2" r="1" fill="#555"/>
<rect x="566.5" y="44" width="13" height="3.8" rx="1.5" fill="#fff" stroke="#5b8fc9" stroke-width="1"/><line x1="573" y1="44.3" x2="573" y2="47.5" stroke="#5b8fc9" stroke-width="0.6"/><rect x="574" y="45.3" width="4" height="1.3" fill="#c9c4f0"/>
<text x="570.9" y="62.9" font-size="10" fill="#333" textLength="5.4" lengthAdjust="spacingAndGlyphs" stroke="#333" stroke-width="0.35">5</text>
<path d="M566.4 64.9 l2.6 -2.2 v4.4 z M580.3 64.9 l-2.6 -2.2 v4.4 z" fill="#555"/><path d="M568.5 64.9 h3 M575 64.9 h3" stroke="#888" stroke-width="1.2"/>
<rect x="567.5" y="75.5" width="11" height="11.8" fill="#fff" stroke="#7a7a7a" stroke-width="1"/>
<line x1="573" y1="76" x2="573" y2="79" stroke="#bbb" stroke-width="0.8"/><line x1="573" y1="83.5" x2="573" y2="87" stroke="#bbb" stroke-width="0.8"/>
<rect x="567.3" y="79.3" width="11.4" height="3.9" fill="#fff" stroke="#5b8fc9" stroke-width="1.1"/>
<rect x="674.1" y="43.8" width="5.9" height="15.7" fill="#3f7cc0"/><rect x="681.1" y="37" width="5.9" height="22.5" fill="#f1c86e"/><rect x="688.1" y="41" width="5.9" height="18.5" fill="#7a7a7a"/>
<circle cx="731" cy="44.3" r="7.5" fill="#fff" stroke="#3f7cc0" stroke-width="2.2"/><line x1="718" y1="58" x2="725.3" y2="50.5" stroke="#3f7cc0" stroke-width="3" stroke-linecap="round"/>
<rect x="752.3" y="37.7" width="20" height="21" fill="#fff" stroke="#6e6e6e" stroke-width="1"/>
<line x1="758.2" y1="38" x2="758.2" y2="58.5" stroke="#a8a8a8" stroke-width="0.9"/>
<line x1="764.6" y1="38" x2="764.6" y2="58.5" stroke="#a8a8a8" stroke-width="0.9"/>
<line x1="752.8" y1="41.3" x2="768" y2="41.3" stroke="#a8a8a8" stroke-width="0.9"/>
<line x1="752.8" y1="45.9" x2="768" y2="45.9" stroke="#a8a8a8" stroke-width="0.9"/>
<line x1="752.8" y1="50.6" x2="768" y2="50.6" stroke="#a8a8a8" stroke-width="0.9"/>
<line x1="752.8" y1="54.3" x2="768" y2="54.3" stroke="#a8a8a8" stroke-width="0.9"/>
<rect x="758.4" y="41.5" width="12" height="9" fill="#c6d7ec" stroke="#2f7d4a" stroke-width="1.1"/>
<path d="M765.5 45 v10.5 l2.5 -2.2 v-6 z" fill="#fff" stroke="#555" stroke-width="0.8"/>
<path d="M8.3 155 l2.9 3 l-2.9 3 M12.3 155 l2.9 3 l-2.9 3" fill="none" stroke="#2e8b57" stroke-width="1.7"/>
<rect x="7.5" y="181.5" width="11.5" height="8" fill="#fff" stroke="#707070" stroke-width="0.9"/><rect x="7.5" y="181.3" width="11.5" height="2.6" fill="#3f7cc0"/>
<rect x="5.3" y="179.4" width="11.4" height="8.3" fill="#fff" stroke="#707070" stroke-width="0.9"/><rect x="4.9" y="179" width="12.2" height="3.6" fill="#3f7cc0"/><line x1="9" y1="182.5" x2="9" y2="187.5" stroke="#bbb" stroke-width="0.7"/><line x1="13" y1="182.5" x2="13" y2="187.5" stroke="#bbb" stroke-width="0.7"/><line x1="5.5" y1="185" x2="16.5" y2="185" stroke="#bbb" stroke-width="0.7"/>
<rect x="7.6" y="209.5" width="12" height="7.8" fill="#fff" stroke="#777" stroke-width="1"/><rect x="9.2" y="211" width="8.8" height="4.8" fill="#b4b4b4"/><path d="M8.3 207.3 h2.5 l-1.6 2.8 h1.6 l-4.6 5.8 l1.6 -4 h-1.6 z" fill="#3f7cc0"/>
<path d="M8.8 236.2 h6.8 l3.6 3.2 v6.2 h-12.4 v-3.4 h1.6 z" fill="#d8d8e4" stroke="#6e6e78" stroke-width="0.9"/><rect x="6.7" y="242.3" width="10.8" height="3.2" fill="#dedcf2" stroke="#6e6e78" stroke-width="0.9"/><path d="M9.5 238 h5.6 l2.4 2.3" fill="none" stroke="#9a9aa8" stroke-width="0.8"/>
<rect x="6.3" y="263.5" width="12.5" height="11" fill="#fff" stroke="#777" stroke-width="0.9"/><rect x="9.5" y="264" width="1.5" height="10" fill="#a8c8ec"/><rect x="14" y="264" width="1.5" height="10" fill="#a8c8ec"/><line x1="9" y1="264" x2="9" y2="274" stroke="#999" stroke-width="0.6"/><line x1="12.5" y1="264" x2="12.5" y2="274" stroke="#999" stroke-width="0.6"/><line x1="16" y1="264" x2="16" y2="274" stroke="#999" stroke-width="0.6"/><line x1="6.5" y1="267" x2="18.5" y2="267" stroke="#ccc" stroke-width="0.5"/><line x1="6.5" y1="270.5" x2="18.5" y2="270.5" stroke="#ccc" stroke-width="0.5"/>
<path d="M8.8 291.4 H11 L11.6 295.2 H13.6 L14.2 291.4 H16.4 L18.8 296.6 V301 H13.9 V297.8 H11.3 V301 H6.4 V296.6 Z" fill="#b8d0ec" stroke="#606870" stroke-width="1"/>
<path d="M124.8 126 L133.4 133.6 M133.4 126 L124.8 133.6" stroke="#c4c4c4" stroke-width="1.1"/>
<path d="M155.3 130 L158.8 133.5 L165.6 125.6" fill="none" stroke="#c4c4c4" stroke-width="1.4"/>
<text x="186.2" y="132.8" font-family="Liberation Serif" font-style="italic" font-size="11" fill="#666" textLength="5" lengthAdjust="spacingAndGlyphs">f</text><text x="190.6" y="133.4" font-family="Liberation Serif" font-style="italic" font-size="8.5" fill="#666">x</text>
</svg></body></html>
